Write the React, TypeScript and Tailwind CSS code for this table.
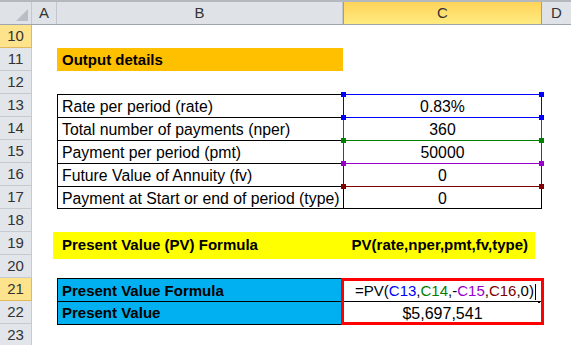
import React from "react";

const rowNums = [10, 11, 12, 13, 14, 15, 16, 17, 18, 19, 20, 21, 22, 23];
const activeRows = [10, 21];

const inputs = [
  { label: "Rate per period (rate)", value: "0.83%", color: "#0000ff", top: "#0000ff" },
  { label: "Total number of payments (nper)", value: "360", color: "#008000", top: "#0000ff" },
  { label: "Payment per period (pmt)", value: "50000", color: "#9900cc", top: "#008000" },
  { label: "Future Value of Annuity (fv)", value: "0", color: "#800000", top: "#9900cc" },
  { label: "Payment at Start or end of period (type)", value: "0", color: "#000000", top: "#800000" },
];

function Handle({ color, pos }: { color: string; pos: string }) {
  return <span className={`absolute h-[5px] w-[5px] ${pos}`} style={{ backgroundColor: color }} />;
}

export default function App() {
  return (
    <div
      className="w-[571px] h-[345px] overflow-hidden bg-white text-[15.8px] text-black"
      style={{ fontFamily: '"Liberation Sans", Arial, sans-serif' }}
    >
      {/* column headers */}
      <div className="flex h-[25px] border-t-2 border-b border-t-[#b4b9bf] border-b-[#9ea5ad] bg-[#dfe3e8] text-[15px] text-[#333]">
        <div className="relative w-[32px] border-r border-[#c2c7cd]">
          <span className="absolute bottom-[3px] right-[3px] h-0 w-0" style={{ borderBottom: "12px solid #b9bec5", borderLeft: "12px solid transparent" }} />
        </div>
        <div className="flex w-[25px] items-center justify-center border-r border-[#c2c7cd]">A</div>
        <div className="flex w-[286px] items-center justify-center border-r border-[#c2c7cd]">B</div>
        <div className="flex w-[199px] items-center justify-center border-x border-[#c19a4a] bg-gradient-to-b from-[#ffd45a] to-[#ffeb80]">C</div>
        <div className="flex flex-1 items-center justify-center">D</div>
      </div>

      <div className="flex">
        {/* row headers */}
        <div className="flex w-[32px] flex-col text-[15px] text-[#333]">
          {rowNums.map((n) => (
            <div
              key={n}
              className={
                activeRows.includes(n)
                  ? "flex h-[23px] shrink-0 items-center justify-center border-b border-r border-[#e0b860] bg-[#fde38b] pt-[1px]"
                  : "flex h-[23px] shrink-0 items-center justify-center border-b border-r border-[#c6cbd1] bg-[#e2e6eb] pt-[1px]"
              }
            >
              {n}
            </div>
          ))}
        </div>

        {/* sheet body */}
        <div className="flex flex-1 flex-col pl-[25px]">
          <div className="h-[23px]" />
          <div className="flex h-[23px]">
            <div className="flex w-[286px] items-center bg-[#ffc000] pl-[5px] pt-[2px] text-[15px] font-bold">Output details</div>
          </div>
          <div className="h-[23px]" />

          {inputs.map((r, i) => (
            <div key={r.label} className="flex h-[23px]">
              <div
                className={`flex w-[286px] items-center whitespace-nowrap border-l border-t border-black pl-[4px] pt-[2px] ${i === inputs.length - 1 ? "border-b" : ""}`}
              >
                {r.label}
              </div>
              <div
                className={`relative flex w-[199px] items-center justify-center border-x border-t pt-[2px] ${i === inputs.length - 1 ? "border-b border-b-black" : ""}`}
                style={{ borderLeftColor: r.color, borderRightColor: r.color, borderTopColor: r.top }}
              >
                {r.value}
                {i < 4 && (
                  <>
                    <Handle color={r.color} pos="-left-[3px] -bottom-[3px] z-10" />
                    <Handle color={r.color} pos="-right-[3px] -bottom-[3px] z-10" />
                  </>
                )}
                {i === 0 && (
                  <>
                    <Handle color={r.color} pos="-left-[3px] -top-[3px] z-20" />
                    <Handle color={r.color} pos="-right-[3px] -top-[3px] z-20" />
                  </>
                )}
              </div>
            </div>
          ))}

          <div className="h-[23px]" />
          <div className="relative h-[23px]">
            <div className="-ml-[4px] flex h-[27px] w-[482px] items-center justify-between bg-[#ffff00] pl-[9px] pr-[7px] text-[15px] font-bold">
              <span>Present Value (PV) Formula</span>
              <span>PV(rate,nper,pmt,fv,type)</span>
            </div>
          </div>
          <div className="h-[23px]" />

          <div className="flex">
            <div className="flex w-[286px] flex-col text-[15px] font-bold">
              <div className="flex h-[23px] items-center border-x border-t border-black bg-[#00b0f0] pl-[4px] pt-[2px]">
                Present Value Formula
              </div>
              <div className="flex h-[24px] items-center border border-black bg-[#00b0f0] pl-[4px] pt-[1px]">Present Value</div>
            </div>
            <div className="relative -ml-[2px] flex h-[47px] w-[203px] flex-col border-[3px] border-[#ff0000]">
              <div className="flex h-[21px] items-center justify-center border-b border-black pl-[6px] pt-[1px] text-[15px]">
                <span>=PV(</span>
                <span className="text-[#0000ff]">C13</span>
                <span>,</span>
                <span className="text-[#008000]">C14</span>
                <span>,-</span>
                <span className="text-[#9900cc]">C15</span>
                <span>,</span>
                <span className="text-[#800000]">C16</span>
                <span>,0)</span>
                <span className="ml-[1px] inline-block h-[16px] w-px bg-black" />
              </div>
              <div className="flex flex-1 items-center justify-center text-[16px]">$5,697,541</div>
              <span className="absolute right-[1px] top-[20px] h-[2px] w-[2px] bg-black" />
            </div>
          </div>
        </div>
      </div>
    </div>
  );
}
